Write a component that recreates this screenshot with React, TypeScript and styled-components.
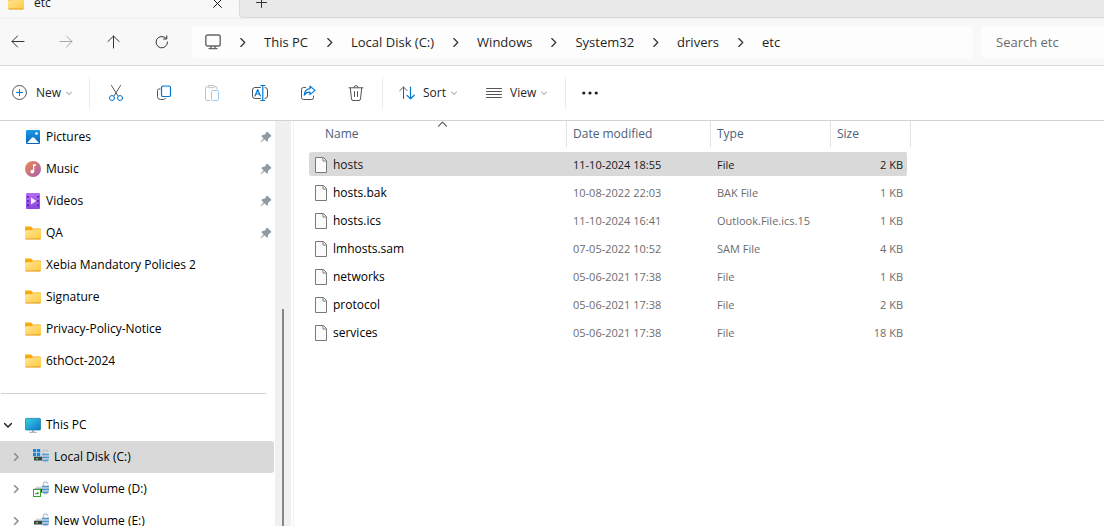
import React from 'react';
import styled, { createGlobalStyle } from 'styled-components';

const GlobalStyle = createGlobalStyle`
  * { box-sizing: border-box; }
  html, body { margin: 0; height: 100%; }
  body {
    overflow: hidden;
    background: #fff;
    color: #000;
    font-family: "Open Sans", "Noto Sans", sans-serif;
    font-size: 12px;
    line-height: 16px;
  }
  button, input { font: inherit; color: inherit; margin: 0; padding: 0; border: 0; background: none; }
  a { color: inherit; text-decoration: none; }
  svg { display: block; flex: none; }
`;

const Window = styled.div`
  display: flex;
  flex-direction: column;
  height: 100vh;
  overflow: hidden;
`;

/* Tab strip */
const TabStrip = styled.header`
  display: flex;
  align-items: flex-end;
  flex: none;
  height: 18px;
  overflow: hidden;
  background: #f8f8f8;
`;

const Tab = styled.div`
  display: flex;
  align-items: center;
  gap: 10px;
  width: 239px;
  height: 30px;
  padding: 0 17px 0 8px;
  color: #1a1a1a;
`;

const TabTitle = styled.span`
  flex: 1;
`;

const StripRest = styled.div`
  display: flex;
  align-items: center;
  flex: 1;
  height: 30px;
  padding-left: 16px;
  background: #e8e8e8;
  border: 1px solid #dadada;
  border-width: 0 0 1px 1px;
  border-bottom-left-radius: 4px;
  color: #333;
`;

/* Navigation row */
const NavBar = styled.nav`
  display: flex;
  align-items: center;
  gap: 8px;
  flex: none;
  height: 48px;
  background: #f8f8f8;
  border-top: 1px solid #efefef;
  border-bottom: 1px solid #dadada;
`;

const NavButtons = styled.div`
  display: flex;
  gap: 12px;
  margin-right: 4px;
`;

const NavButton = styled.button`
  display: flex;
  align-items: center;
  justify-content: center;
  width: 36px;
  height: 32px;
  color: #333;

  &:disabled { color: #aaa; }
`;

const AddressBar = styled.ol`
  display: flex;
  align-items: center;
  flex: 1;
  height: 32px;
  margin: 0;
  padding: 0 13px;
  list-style: none;
  background: #fdfdfd;
  border-radius: 4px;
  font-size: 13px;
  color: #1f1f1f;
`;

const Crumb = styled.li`
  display: flex;
  align-items: center;
  white-space: nowrap;
`;

const CrumbChevron = styled.span`
  display: flex;
  justify-content: center;
  width: 43px;
  color: #333;
`;

const SearchInput = styled.input`
  width: 123px;
  height: 32px;
  padding: 0 15px;
  background: #fdfdfd;
  border-radius: 4px 0 0 4px;
  font-size: 13px;
  outline: none;

  &::placeholder { color: #6a6a6a; opacity: 1; }
`;

/* Command bar */
const CommandBar = styled.div`
  display: flex;
  align-items: center;
  flex: none;
  height: 55px;
  background: #fff;
  border-bottom: 1px solid #d2d2d2;
  color: #1f1f1f;
`;

const MenuButton = styled.button<{ $width: number; $inset: number }>`
  display: flex;
  align-items: center;
  gap: 8px;
  width: ${(p) => p.$width}px;
  height: 32px;
  padding-left: ${(p) => p.$inset}px;
`;

const MenuLabel = styled.span`
  display: flex;
  align-items: center;
  gap: 5px;
`;

const Separator = styled.span`
  flex: none;
  width: 1px;
  height: 32px;
  background: #ebebeb;
`;

const IconGroup = styled.div`
  display: flex;
  padding: 0 2px;
`;

const IconButton = styled.button`
  display: flex;
  align-items: center;
  justify-content: center;
  width: 48px;
  height: 32px;
`;

/* Body */
const Body = styled.div`
  display: flex;
  flex: 1;
  min-height: 0;
`;

const Sidebar = styled.aside`
  flex: none;
  width: 275px;
  overflow: hidden;
`;

const NavList = styled.ul`
  margin: 0;
  padding: 0;
  list-style: none;
`;

const NavRow = styled.a<{ $nested?: boolean; $selected?: boolean }>`
  display: flex;
  align-items: center;
  gap: 5px;
  height: 32px;
  margin-right: 1px;
  padding-right: 2px;
  padding-left: ${(p) => (p.$nested ? 8 : 0)}px;
  background: ${(p) => (p.$selected ? '#d9d9d9' : 'transparent')};
  border-radius: 0 3px 3px 0;
`;

const Expander = styled.span`
  display: flex;
  justify-content: center;
  width: 15px;
  margin-right: 5px;
`;

const RowLabel = styled.span`
  flex: 1;
  white-space: nowrap;
`;

const Divider = styled.hr`
  height: 1px;
  margin: 16px 9px 15px 1px;
  border: 0;
  background: #d2d2d2;
`;

const ScrollTrack = styled.div`
  display: flex;
  flex: none;
  justify-content: center;
  width: 16px;
  padding-top: 188px;
  background: #f0f0f0;
`;

const ScrollThumb = styled.div`
  width: 2px;
  background: #868686;
`;

const FilePane = styled.main`
  flex: 1;
  min-width: 0;
  margin-left: 2px;
  padding-left: 15px;
  border-left: 1px solid #f4f4f4;
`;

const FileTable = styled.table`
  width: 602px;
  table-layout: fixed;
  border-collapse: separate;
  border-spacing: 0;
`;

const HeadCell = styled.th<{ $width: number }>`
  position: relative;
  width: ${(p) => p.$width}px;
  height: 29px;
  padding: 0;
  vertical-align: top;
  font-weight: 400;
`;

const HeadButton = styled.button<{ $inset: number }>`
  width: 100%;
  height: 26px;
  padding-left: ${(p) => p.$inset}px;
  border-right: 1px solid #e3e3e3;
  text-align: left;
  color: #4c607a;
`;

const SortMark = styled.span`
  position: absolute;
  top: 0;
  left: 50%;
  color: #555;
`;

const Cell = styled.td<{ $right?: boolean }>`
  height: 28px;
  padding: 2px 4px 0 6px;
  border: 2px solid transparent;
  border-width: 2px 0;
  background-clip: padding-box;
  color: #6d6d6d;
  font-size: 11px;
  white-space: nowrap;
  text-align: ${(p) => (p.$right ? 'right' : 'left')};

  &:first-child { color: #000; font-size: 12px; border-radius: 4px 0 0 4px; }
  &:last-child { border-right-width: 4px; border-radius: 0 5px 5px 0; }
`;

const FileRow = styled.tr<{ $selected?: boolean }>`
  ${(p) => p.$selected && `& > ${Cell} { background-color: #d9d9d9; color: #1a1a1a; }`}
`;

const FileName = styled.span`
  display: flex;
  align-items: center;
  gap: 6px;
`;

/* Icons */
const line = { fill: 'none', stroke: 'currentColor', strokeLinecap: 'round' as const, strokeLinejoin: 'round' as const };
const BLUE = '#0078d4';
const GREY = '#555';

const Chevron = ({ dir, color, size = 8, weight = 1 }: { dir: 'right' | 'down' | 'up'; color?: string; size?: number; weight?: number }) => {
  const d = { right: 'M2.5.5 6 4 2.5 7.5', down: 'M.5 2.5 4 6 7.5 2.5', up: 'M.5 4.5 4 1 7.5 4.5' }[dir];
  return (
    <svg width={size} height={size} viewBox="0 0 8 8" color={color} aria-hidden="true">
      <path d={d} {...line} strokeWidth={weight} />
    </svg>
  );
};

const Folder = () => (
  <svg width="16" height="16" viewBox="0 0 16 16" aria-hidden="true">
    <defs>
      <linearGradient id="folder" x1="0" y1="0" x2="1" y2="1">
        <stop offset="0" stopColor="#ffe69a" />
        <stop offset="1" stopColor="#ffc93c" />
      </linearGradient>
    </defs>
    <path d="M0 2.5Q0 1.5 1 1.5H6L8 3.5H15Q16 3.5 16 4.5V8H0Z" fill="#f2ad0c" />
    <path d="M0 6Q0 5.2 1 5.2H6.2L8 4.2H15Q16 4.2 16 5V13.3Q16 14.3 15 14.3H1Q0 14.3 0 13.3Z" fill="url(#folder)" />
    <path d="M.5 14H15.5" stroke="#e0a020" strokeWidth="1" />
  </svg>
);

const Pictures = () => (
  <svg width="16" height="16" viewBox="0 0 16 16" aria-hidden="true">
    <defs>
      <linearGradient id="pictures" x1="0" y1="0" x2="0" y2="1">
        <stop offset="0" stopColor="#1c9be8" />
        <stop offset="1" stopColor="#0763b8" />
      </linearGradient>
    </defs>
    <rect x="1" y="1" width="14" height="14" rx="1" fill="url(#pictures)" />
    <path d="M2 14 7 8.6Q8 7.8 9 8.6L14 14Z" fill="#f5fbff" />
    <circle cx="11.5" cy="4.5" r="1.3" fill="#fff" />
  </svg>
);

const Music = () => (
  <svg width="16" height="16" viewBox="0 0 16 16" aria-hidden="true">
    <defs>
      <linearGradient id="music" x1="0" y1="0" x2="1" y2="1">
        <stop offset="0" stopColor="#ee8a4c" />
        <stop offset="1" stopColor="#a75cb4" />
      </linearGradient>
    </defs>
    <circle cx="8" cy="8" r="8" fill="url(#music)" />
    <path d="M8 3.2H10.8V5H9.2V10.6H8Z" fill="#fff" />
    <circle cx="7.3" cy="10.6" r="1.9" fill="#fff" />
  </svg>
);

const Videos = () => (
  <svg width="16" height="16" viewBox="0 0 16 16" aria-hidden="true">
    <defs>
      <linearGradient id="videos" x1="0" y1="0" x2="0" y2="1">
        <stop offset="0" stopColor="#b46cf2" />
        <stop offset="1" stopColor="#8a48e0" />
      </linearGradient>
    </defs>
    <rect x="1" y="0" width="14" height="16" rx="1" fill="url(#videos)" />
    <path d="M2 3h2v1.6H2zM2 7.2h2v1.6H2zM2 11.4h2V13H2zM12 3h2v1.6h-2zM12 7.2h2v1.6h-2zM12 11.4h2V13h-2z" fill="#52229c" />
    <path d="M6 4.6 11.4 8 6 11.4Z" fill="#f6efff" />
  </svg>
);

const Computer = () => (
  <svg width="16" height="16" viewBox="0 0 16 16" aria-hidden="true">
    <defs>
      <linearGradient id="computer" x1="0" y1="0" x2="1" y2="1">
        <stop offset="0" stopColor="#35d2e0" />
        <stop offset="1" stopColor="#0f74cc" />
      </linearGradient>
    </defs>
    <path d="M7 13h2v2H7z" fill="#a8b4be" />
    <path d="M4.2 15.3h7.6" stroke="#9aa8b4" />
    <rect x=".4" y="1.4" width="15.2" height="11.6" rx="1" fill="url(#computer)" stroke="#1b80a8" strokeWidth=".8" />
  </svg>
);

const Drive = ({ badge }: { badge?: 'windows' | 'share' }) => (
  <svg width="16" height="16" viewBox="0 0 16 16" aria-hidden="true">
    <path d="M1 8.5 3.5 5.5H11V9H1Z" fill="#d5d8da" />
    <rect x="1" y="7.8" width="11" height="3.8" rx=".6" fill="#3c4043" />
    <rect x="3" y="9" width="2" height="1.4" fill="#4fe04f" />
    <path d="M10.4 5V3Q10.4.8 12.5.8T14.6 3" fill="none" stroke="#b9c6d2" strokeWidth="1.3" />
    <path d="M9 4.5H16V10.4Q15.4 13 12.5 13.6 9.6 13 9 10.4Z" fill="#b4c4d4" />
    <path d="M9 5.4h7M9 8.4h7M9.6 11.4h5.8" stroke="#3b95d4" strokeWidth="1" />
    {badge === 'windows' && <path d="M0 0h3.2v3.2H0zM4 0h3.2v3.2H4zM0 4h3.2v3.2H0zM4 4h3.2v3.2H4z" fill="#1687dd" />}
    {badge === 'share' && (
      <>
        <rect x=".5" y="8.5" width="7" height="7" fill="#fff" stroke="#3aa52b" />
        <path d="M2.3 13.4V12H4V10.6L6.2 12.2 4 13.8V13Z" fill="#3aa52b" />
      </>
    )}
  </svg>
);

const Pin = () => (
  <svg width="12" height="12" viewBox="0 0 12 12" aria-hidden="true">
    <path d="M6.2 1 7.4.8 11.2 4.6 11 5.8 10 6 8.2 7.8 7.8 10.4 6.8 10.6 4.4 8.2 1.2 11.2.6 10.8 3.6 7.4 1.4 5.2 1.8 4.2 4.4 3.8 6 2.2Z" fill="#8f9aa3" />
  </svg>
);

const Page = () => (
  <svg width="12" height="16" viewBox="0 0 12 16" aria-hidden="true">
    <path d="M.5.5H8.5L11.5 3.5V15.5H.5Z" fill="#fbfbfb" stroke="#7a7a7a" />
    <path d="M8 .5V4H11.5" fill="none" stroke="#7a7a7a" />
  </svg>
);

const Icon = ({ children, weight = 1 }: { children: React.ReactNode; weight?: number }) => (
  <svg width="16" height="16" viewBox="0 0 16 16" {...line} strokeWidth={weight} aria-hidden="true">{children}</svg>
);

const crumbs = ['This PC', 'Local Disk (C:)', 'Windows', 'System32', 'drivers', 'etc'];

const quickAccess = [
  { label: 'Pictures', icon: <Pictures />, pinned: true },
  { label: 'Music', icon: <Music />, pinned: true },
  { label: 'Videos', icon: <Videos />, pinned: true },
  { label: 'QA', icon: <Folder />, pinned: true },
  { label: 'Xebia Mandatory Policies 2', icon: <Folder /> },
  { label: 'Signature', icon: <Folder /> },
  { label: 'Privacy-Policy-Notice', icon: <Folder /> },
  { label: '6thOct-2024', icon: <Folder /> },
];

const drives = [
  { label: 'Local Disk (C:)', icon: <Drive badge="windows" />, selected: true },
  { label: 'New Volume (D:)', icon: <Drive badge="share" /> },
  { label: 'New Volume (E:)', icon: <Drive /> },
];

const columns = [
  { label: 'Name', width: 258, inset: 16, sorted: true },
  { label: 'Date modified', width: 144, inset: 6 },
  { label: 'Type', width: 120, inset: 6 },
  { label: 'Size', width: 80, inset: 6 },
];

const files = [
  ['hosts', '11-10-2024 18:55', 'File', '2 KB'],
  ['hosts.bak', '10-08-2022 22:03', 'BAK File', '1 KB'],
  ['hosts.ics', '11-10-2024 16:41', 'Outlook.File.ics.15', '1 KB'],
  ['lmhosts.sam', '07-05-2022 10:52', 'SAM File', '4 KB'],
  ['networks', '05-06-2021 17:38', 'File', '1 KB'],
  ['protocol', '05-06-2021 17:38', 'File', '2 KB'],
  ['services', '05-06-2021 17:38', 'File', '18 KB'],
];

const CommandMenu = ({ label, width, inset, children }: { label: string; width: number; inset: number; children: React.ReactNode }) => (
  <MenuButton $width={width} $inset={inset}>
    <Icon>{children}</Icon>
    <MenuLabel>
      {label}
      <Chevron dir="down" color="#888" size={6} weight={1.3} />
    </MenuLabel>
  </MenuButton>
);

export default function App() {
  return (
    <Window>
      <GlobalStyle />
      <TabStrip>
        <Tab>
          <Folder />
          <TabTitle>etc</TabTitle>
          <button aria-label="Close tab">
            <svg width="9" height="9" viewBox="0 0 9 9" {...line}><path d="M.5.5l8 8M8.5.5l-8 8" /></svg>
          </button>
        </Tab>
        <StripRest>
          <button aria-label="New tab">
            <svg width="11" height="11" viewBox="0 0 11 11" {...line}><path d="M5.5.5v10M.5 5.5h10" /></svg>
          </button>
        </StripRest>
      </TabStrip>

      <NavBar aria-label="Navigation">
        <NavButtons>
          <NavButton aria-label="Back"><Icon><path d="M2 7.5h12M7.5 2 2 7.5 7.5 13" /></Icon></NavButton>
          <NavButton aria-label="Forward" disabled><Icon><path d="M2 7.5h12M8.5 2 14 7.5 8.5 13" /></Icon></NavButton>
          <NavButton aria-label="Up"><Icon><path d="M7.5 14V2M2 7.5 7.5 2 13 7.5" /></Icon></NavButton>
          <NavButton aria-label="Refresh"><Icon><path d="M13.5 8A5.7 5.7 0 1 1 11.7 4M12.8 1.8V5H9.6" /></Icon></NavButton>
        </NavButtons>
        <AddressBar>
          <Crumb>
            <Icon weight={1.4}>
              <g stroke="#666"><rect x=".8" y="1" width="14.4" height="11" rx="1.8" /><path d="M6 12.5v2M10 12.5v2M4 14.6h8" /></g>
            </Icon>
          </Crumb>
          {crumbs.map((name) => (
            <Crumb key={name}>
              <CrumbChevron><Chevron dir="right" weight={1.1} size={9} /></CrumbChevron>
              <a href="#">{name}</a>
            </Crumb>
          ))}
        </AddressBar>
        <SearchInput type="text" placeholder="Search etc" aria-label="Search etc" />
      </NavBar>

      <CommandBar>
        <CommandMenu label="New" width={89} inset={12}>
          <circle cx="7.5" cy="7.5" r="7" stroke={GREY} />
          <path d="M7.5 4.5v6M4.5 7.5h6" stroke={BLUE} />
        </CommandMenu>
        <Separator />
        <IconGroup>
          <IconButton aria-label="Cut">
            <Icon>
              <path d="M3.5.5 10 11M12.5.5 6 11" stroke={GREY} />
              <circle cx="4" cy="13" r="2.5" stroke={BLUE} />
              <circle cx="12" cy="13" r="2.5" stroke={BLUE} />
            </Icon>
          </IconButton>
          <IconButton aria-label="Copy">
            <Icon>
              <path d="M4 4H2.8Q1.5 4 1.5 5.5V11.5Q1.5 14.5 4.5 14.5H7.5Q9 14.5 9.3 13.4" stroke={GREY} />
              <rect x="5.5" y="1" width="9" height="10.5" rx="1.6" stroke={BLUE} strokeWidth="1.2" />
            </Icon>
          </IconButton>
          <IconButton aria-label="Paste" disabled>
            <Icon>
              <path d="M4.5 1.8H2.5Q1.5 1.8 1.5 3V14Q1.5 15.5 3 15.5H6M10.5 1.8H12Q13 1.8 13 3V4M5 .5H10Q10.5.5 10.5 1.5T10 2.7H5Q4.5 2.7 4.5 1.5T5 .5Z" stroke="#c2c2c2" />
              <rect x="7.5" y="5.5" width="7" height="10" rx="1" stroke="#9bcbf0" />
            </Icon>
          </IconButton>
          <IconButton aria-label="Rename">
            <Icon>
              <path d="M8.5 2.5H3Q.5 2.5.5 5V11Q.5 13.5 3 13.5H8.5M13 2.5Q15.5 2.5 15.5 5V11Q15.5 13.5 13 13.5" stroke={GREY} />
              <path d="M3 11 5.7 4.6 8.4 11M4 9H7.4M10.8.5V15.5M8.8.5H12.8M8.8 15.5H12.8" stroke={BLUE} strokeWidth="1.2" />
            </Icon>
          </IconButton>
          <IconButton aria-label="Share">
            <Icon>
              <path d="M5.5 2.5H3.5Q1.5 2.5 1.5 4.5V12.5Q1.5 14.5 3.5 14.5H11.5Q13.5 14.5 13.5 12.5V11" stroke={GREY} />
              <path d="M10 1.2 15 5.4 10 9.6V7.2Q6.3 7 4.2 10.2 4.8 4.2 10 3.7Z" stroke={BLUE} strokeWidth="1.2" />
            </Icon>
          </IconButton>
          <IconButton aria-label="Delete">
            <Icon>
              <path d="M1 2.8H15M5.8 2.5Q6 .6 8 .6T10.2 2.5M2.3 3 3.5 14Q3.7 15.5 5 15.5H11Q12.3 15.5 12.5 14L13.7 3M6.5 6.5V11.5M9.5 6.5V11.5" stroke={GREY} />
            </Icon>
          </IconButton>
        </IconGroup>
        <Separator />
        <CommandMenu label="Sort" width={87} inset={16}>
          <path d="M4.5 13.5V2M.8 5.7 4.5 2 8 5.5" stroke={GREY} />
          <path d="M11.5 2V13.8M8 10.3 11.5 13.8 15.2 10.2" stroke={BLUE} strokeWidth="1.2" />
        </CommandMenu>
        <CommandMenu label="View" width={95} inset={16}>
          <path d="M.5 3.5h15M.5 6.5h15M.5 9.5h15M.5 12.5h15" stroke={GREY} />
        </CommandMenu>
        <Separator />
        <IconButton aria-label="See more">
          <svg width="16" height="4" viewBox="0 0 16 4" fill="#1f1f1f"><circle cx="1.8" cy="2" r="1.6" /><circle cx="8" cy="2" r="1.6" /><circle cx="14.2" cy="2" r="1.6" /></svg>
        </IconButton>
      </CommandBar>

      <Body>
        <Sidebar aria-label="Folders">
          <NavList>
            {quickAccess.map(({ label, icon, pinned }) => (
              <li key={label}>
                <NavRow href="#">
                  <Expander />
                  {icon}
                  <RowLabel>{label}</RowLabel>
                  {pinned && <Pin />}
                </NavRow>
              </li>
            ))}
          </NavList>
          <Divider />
          <NavList>
            <li>
              <NavRow href="#">
                <Expander><Chevron dir="down" color="#222" weight={1.5} /></Expander>
                <Computer />
                <RowLabel>This PC</RowLabel>
              </NavRow>
            </li>
            {drives.map(({ label, icon, selected }) => (
              <li key={label}>
                <NavRow href="#" $nested $selected={selected}>
                  <Expander><Chevron dir="right" color="#8a8a8a" weight={1.5} /></Expander>
                  {icon}
                  <RowLabel>{label}</RowLabel>
                </NavRow>
              </li>
            ))}
          </NavList>
        </Sidebar>
        <ScrollTrack><ScrollThumb /></ScrollTrack>
        <FilePane>
          <FileTable>
            <thead>
              <tr>
                {columns.map(({ label, width, inset, sorted }) => (
                  <HeadCell key={label} $width={width} scope="col">
                    <HeadButton $inset={inset}>{label}</HeadButton>
                    {sorted && <SortMark><Chevron dir="up" size={9} /></SortMark>}
                  </HeadCell>
                ))}
              </tr>
            </thead>
            <tbody>
              {files.map(([name, date, type, size], i) => (
                <FileRow key={name} $selected={i === 0}>
                  <Cell><FileName><Page />{name}</FileName></Cell>
                  <Cell>{date}</Cell>
                  <Cell>{type}</Cell>
                  <Cell $right>{size}</Cell>
                </FileRow>
              ))}
            </tbody>
          </FileTable>
        </FilePane>
      </Body>
    </Window>
  );
}
